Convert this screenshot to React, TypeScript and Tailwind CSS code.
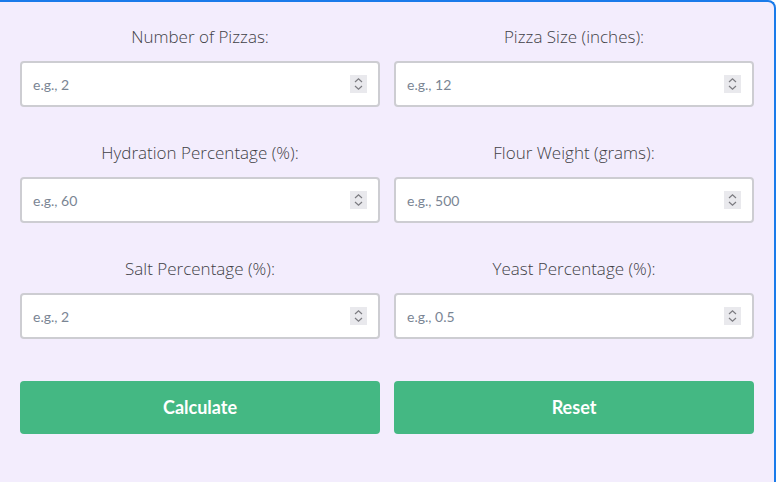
import React from "react";

const fields = [
  { label: "Number of Pizzas:", placeholder: "e.g., 2" },
  { label: "Pizza Size (inches):", placeholder: "e.g., 12" },
  { label: "Hydration Percentage (%):", placeholder: "e.g., 60" },
  { label: "Flour Weight (grams):", placeholder: "e.g., 500" },
  { label: "Salt Percentage (%):", placeholder: "e.g., 2" },
  { label: "Yeast Percentage (%):", placeholder: "e.g., 0.5" },
];

function Spinner() {
  return (
    <div className="absolute right-[13px] top-1/2 -translate-y-1/2 flex h-[18px] w-[17px] items-center justify-center bg-[#e9e9ed]">
      <svg width="9" height="14" viewBox="0 0 9 14" fill="none" stroke="#7b7b80" strokeWidth="1.2">
        <path d="M1 5 L4.5 1.8 L8 5" />
        <path d="M1 9 L4.5 12.2 L8 9" />
      </svg>
    </div>
  );
}

export default function App() {
  return (
    <div className="h-[482px] w-[776px] overflow-hidden bg-white font-['Lato',sans-serif]">
      <div className="h-full w-full rounded-tr-lg border-t-2 border-r-2 border-[#1a7bea] bg-[#f3edfd] pl-5 pr-[20px] pt-[24px]">
        <div className="grid grid-cols-2 gap-x-[14px] gap-y-[35px]">
          {fields.map((f) => (
            <div key={f.label} className="flex flex-col">
              <label className="mb-[13px] text-center font-['Open_Sans',sans-serif] text-[17px] font-light leading-[22px] text-[#3f3f46]">
                {f.label}
              </label>
              <div className="relative">
                <input
                  type="text"
                  placeholder={f.placeholder}
                  className="h-[46px] w-full rounded-[4px] border-2 border-[#cdcdd2] bg-white px-[11px] text-[14px] text-[#333] placeholder:text-[#7a8594] outline-none"
                />
                <Spinner />
              </div>
            </div>
          ))}
        </div>
        <div className="mt-[42px] grid grid-cols-2 gap-x-[14px]">
          <button className="h-[53px] rounded-[4px] bg-[#44b883] text-[18px] font-bold text-white">Calculate</button>
          <button className="h-[53px] rounded-[4px] bg-[#44b883] text-[18px] font-bold text-white">Reset</button>
        </div>
      </div>
    </div>
  );
}
